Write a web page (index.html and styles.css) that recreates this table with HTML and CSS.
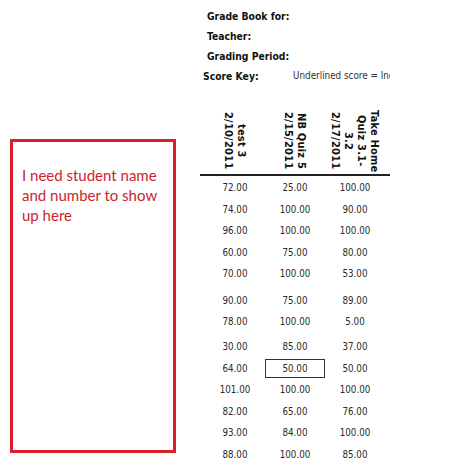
FILE: index.html
```html
<!DOCTYPE html>
<html>
<head>
<meta charset="utf-8">
<link rel="stylesheet" href="styles.css">
</head>
<body>
<div class="page">
  <div class="note">
    <p class="note-text">I need student name and number to show up here</p>
  </div>
  <div class="book">
    <div class="info">
      <div class="info-row">Grade Book for:</div>
      <div class="info-row">Teacher:</div>
      <div class="info-row">Grading Period:</div>
      <div class="info-row key">
        <span class="key-label">Score Key:</span>
        <span class="key-value">Underlined score = Incomplete</span>
      </div>
    </div>
    <div class="grades">
      <div class="heads">
        <div class="head"><span class="vt">test 3<br>2/10/2011</span></div>
        <div class="head"><span class="vt">NB Quiz 5<br>2/15/2011</span></div>
        <div class="head"><span class="vt">Take Home<br>Quiz 3.1-<br>3.2<br>2/17/2011</span></div>
      </div>
      <div class="rows">
        <div class="row"><span>72.00</span><span>25.00</span><span>100.00</span></div>
        <div class="row"><span>74.00</span><span>100.00</span><span>90.00</span></div>
        <div class="row"><span>96.00</span><span>100.00</span><span>100.00</span></div>
        <div class="row"><span>60.00</span><span>75.00</span><span>80.00</span></div>
        <div class="row"><span>70.00</span><span>100.00</span><span>53.00</span></div>
        <div class="row gap-a"><span>90.00</span><span>75.00</span><span>89.00</span></div>
        <div class="row"><span>78.00</span><span>100.00</span><span>5.00</span></div>
        <div class="row gap-b"><span>30.00</span><span>85.00</span><span>37.00</span></div>
        <div class="row"><span>64.00</span><span class="boxed">50.00</span><span>50.00</span></div>
        <div class="row"><span>101.00</span><span>100.00</span><span>100.00</span></div>
        <div class="row"><span>82.00</span><span>65.00</span><span>76.00</span></div>
        <div class="row"><span>93.00</span><span>84.00</span><span>100.00</span></div>
        <div class="row"><span>88.00</span><span>100.00</span><span>85.00</span></div>
      </div>
    </div>
  </div>
</div>
</body>
</html>
```
FILE: styles.css
```css
html, body {
  margin: 0;
  padding: 0;
  background: #ffffff;
}

.page {
  display: flex;
  align-items: flex-start;
  width: 474px;
  height: 467px;
  overflow: hidden;
}

.note {
  margin: 139px 0 0 10px;
  width: 166px;
  height: 314px;
  box-sizing: border-box;
  border: 3px solid #da1f2d;
  padding: 23px 8px 0 9px;
}

.note-text {
  margin: 0;
  font-family: Lato, "Open Sans", sans-serif;
  font-size: 15px;
  line-height: 20px;
  color: #cc2330;
}

.book {
  margin-left: 24px;
  width: 190px;
  overflow: hidden;
  font-family: "DejaVu Sans Condensed", "DejaVu Sans", sans-serif;
  color: #222;
}

.info {
  padding-top: 6px;
}

.info-row {
  height: 20px;
  line-height: 20px;
  padding-left: 7px;
  font-size: 10.3px;
  font-weight: bold;
  color: #111;
  white-space: nowrap;
}

.info-row.key {
  display: flex;
  padding-left: 3px;
}

.key-label {
  width: 90px;
  flex: none;
}

.key-value {
  font-weight: normal;
  font-size: 9.8px;
  color: #333;
}

.grades {
  margin-top: 22px;
}

.heads {
  display: flex;
  height: 66px;
  padding-left: 5px;
  border-bottom: 2px solid #222;
}

.head {
  width: 60px;
  display: flex;
  justify-content: center;
  align-items: center;
}

.vt {
  writing-mode: vertical-rl;
  text-align: center;
  font-size: 11px;
  font-weight: bold;
  line-height: 13px;
  letter-spacing: 0.2px;
  color: #111;
}

.rows {
  padding-left: 5px;
  padding-top: 1px;
}

.row {
  display: flex;
  height: 21.5px;
  align-items: center;
}

.row.gap-a {
  margin-top: 5px;
}

.row.gap-b {
  margin-top: 3.5px;
}

.row span {
  width: 60px;
  text-align: center;
  font-size: 9.7px;
  color: #2a2a2a;
}

.row .boxed {
  box-sizing: border-box;
  height: 19px;
  line-height: 17px;
  border: 1px solid #333;
}
```
